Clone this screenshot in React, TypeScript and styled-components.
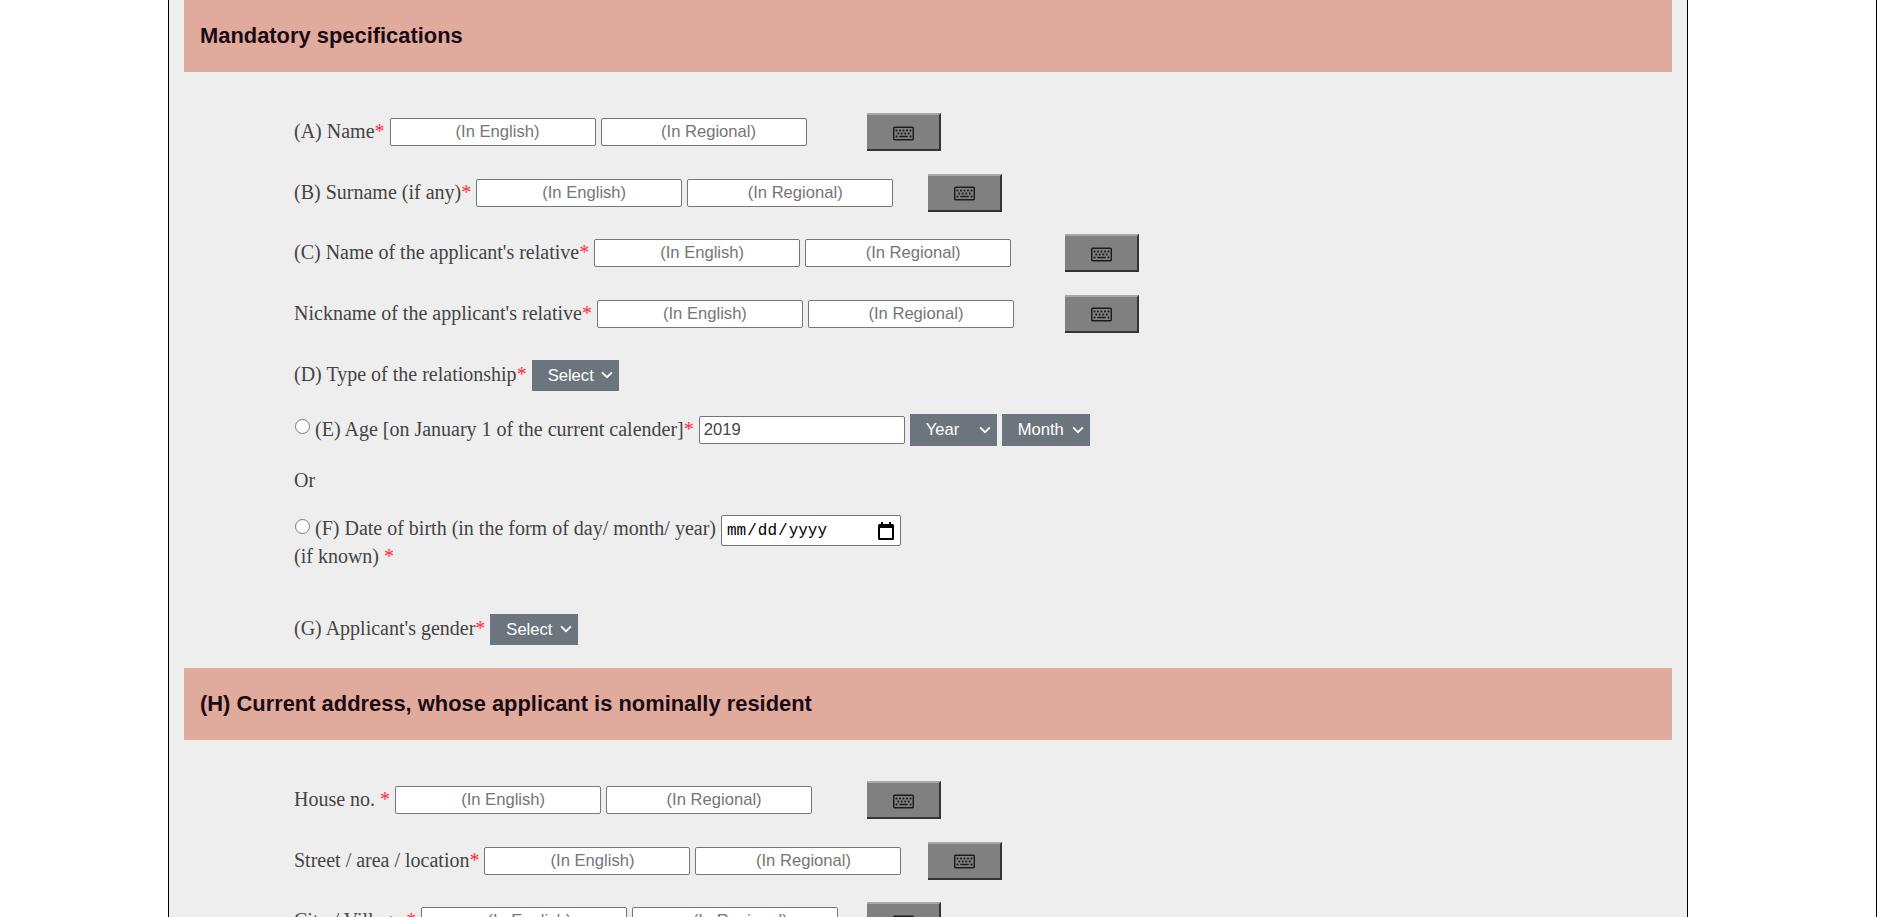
import { createGlobalStyle, styled } from 'styled-components';
import { FaRegKeyboard } from 'react-icons/fa';

const GlobalStyle = createGlobalStyle`
	html, body {
		margin: 0;
		height: 917px;
		overflow: hidden;
		background: #fff;
	}
`;

const CHEVRON =
	"url(\"data:image/svg+xml,%3Csvg xmlns='http://www.w3.org/2000/svg' viewBox='0 0 11 7'%3E%3Cpath d='M1 1l4.5 4.5L10 1' fill='none' stroke='%23fff' stroke-width='1.6'/%3E%3C/svg%3E\")";

const CALENDAR =
	"url(\"data:image/svg+xml,%3Csvg xmlns='http://www.w3.org/2000/svg' viewBox='0 0 16 18'%3E%3Cpath d='M3 0h2v2h6V0h2v2h1.5A1.5 1.5 0 0 1 16 3.500V16.500A1.500 1.500 0 0 1 14.500 18H1.500A1.500 1.500 0 0 1 0 16.500V3.500A1.500 1.500 0 0 1 1.500 2H3zM2 6v10h12V6z'/%3E%3C/svg%3E\")";

const Page = styled.div`
	width: 1877px;
	height: 917px;
	padding-left: 168px;
	box-sizing: border-box;
	border-right: 1px solid #000;
	overflow: hidden;
`;

const Frame = styled.main`
	width: 1520px;
	height: 917px;
	box-sizing: border-box;
	border-left: 1px solid #000;
	border-right: 1px solid #000;
	padding: 0 15px;
	background: #eee;
`;

const Band = styled.h2`
	margin: ${(p) => p.$top ?? 0}px 0 0;
	height: 72px;
	padding-left: 16px;
	display: flex;
	align-items: center;
	background: #e0aa9c;
	color: #1c0a12;
	font: bold 21.9px 'Liberation Sans', Arial, sans-serif;
`;

const Form = styled.form`
	padding-left: 110px;
	padding-top: ${(p) => p.$top ?? 0}px;
	color: #444;
	font: 20px/27px 'Liberation Serif', 'Times New Roman', serif;
`;

const Row = styled.div`
	display: flex;
	align-items: center;
	min-height: ${(p) => p.$height ?? 38}px;
	margin-top: ${(p) => p.$top ?? 22.5}px;
`;

const Fields = styled.div`
	width: ${(p) => (p.$width ? `${p.$width}px` : 'auto')};
	flex-shrink: 0;
`;

const SecondLine = styled.div`
	margin-top: -3px;
`;

const Star = styled.span`
	color: #ff2a3c;
`;

const TextInput = styled.input`
	width: 206px;
	height: 28px;
	box-sizing: border-box;
	padding: 1px 4px 1px ${(p) => (p.$left ? 4 : 14)}px;
	vertical-align: ${(p) => (p.$left ? 0 : 1)}px;
	border: 1px solid #767676;
	border-radius: 2px;
	background: #fff;
	color: #444;
	font: 16.6px 'Liberation Sans', Arial, sans-serif;
	text-align: ${(p) => (p.$left ? 'left' : 'center')};

	&::placeholder {
		color: #757575;
		opacity: 1;
	}
`;

const DateInput = styled.input`
	width: 180px;
	height: 31px;
	box-sizing: border-box;
	padding-left: 4px;
	border: 1px solid #767676;
	border-radius: 2px;
	background: #fff;
	color: #000;
	font: 16px 'Liberation Mono', monospace;

	&::-webkit-calendar-picker-indicator {
		width: 16px;
		height: 18px;
		padding: 0;
		margin-right: 6px;
		background: ${CALENDAR} center / contain no-repeat;
	}
`;

const Select = styled.select`
	width: ${(p) => p.$width ?? 87}px;
	height: ${(p) => p.$height ?? 31}px;
	padding: 0 0 0 16px;
	border: 0;
	border-radius: 0;
	appearance: none;
	background: #6c757d ${CHEVRON} no-repeat right 6px center / 12px 8px;
	color: #fff;
	font: 16.6px 'Liberation Sans', Arial, sans-serif;
`;

const Radio = styled.input`
	width: 15px;
	height: 15px;
	margin: 0 0 0 1px;
	vertical-align: 1px;
`;

const KeyButton = styled.button`
	width: 74px;
	height: 38px;
	flex-shrink: 0;
	padding: 2px 0 0;
	display: flex;
	align-items: center;
	justify-content: center;
	background: #808080;
	border-style: solid;
	border-width: 2px 2px 2px 0;
	border-color: #a8a8a8 #333 #333 #808080;
	color: #1c1c1c;
	font-size: 21px;
`;

function NameField({ label, width }: { label: string; width: number }) {
	return (
		<Row>
			<Fields $width={width}>
				{label}
				<Star>*</Star> <TextInput placeholder="(In English)" /> <TextInput placeholder="(In Regional)" />
			</Fields>
			<KeyButton type="button" aria-label="Keyboard">
				<FaRegKeyboard />
			</KeyButton>
		</Row>
	);
}

export default function App() {
	return (
		<>
			<GlobalStyle />
			<Page>
				<Frame>
					<Band>Mandatory specifications</Band>
					<Form $top={18.5}>
						<NameField label="(A) Name" width={573} />
						<NameField label="(B) Surname (if any)" width={634} />
						<NameField label="(C) Name of the applicant's relative" width={771} />
						<NameField label="Nickname of the applicant's relative" width={771} />
						<Row $height={31} $top={27}>
							<Fields>
								(D) Type of the relationship<Star>*</Star>{' '}
								<Select $width={87}>
									<option>Select</option>
								</Select>
							</Fields>
						</Row>
						<Row $height={32} $top={23}>
							<Fields>
								<Radio type="radio" name="age" /> (E) Age [on January 1 of the current calender]<Star>*</Star>{' '}
								<TextInput defaultValue="2019" $left />{' '}
								<Select $width={87} $height={32}>
									<option>Year</option>
								</Select>{' '}
								<Select $width={88} $height={32}>
									<option>Month</option>
								</Select>
							</Fields>
						</Row>
						<Row $height={27} $top={21}>
							<Fields>Or</Fields>
						</Row>
						<Row $height={58} $top={20}>
							<Fields>
								<Radio type="radio" name="age" /> (F) Date of birth (in the form of day/ month/ year){' '}
								<DateInput type="date" />
								<SecondLine>
									(if known) <Star>*</Star>
								</SecondLine>
							</Fields>
						</Row>
						<Row $height={31} $top={42}>
							<Fields>
								(G) Applicant's gender<Star>*</Star>{' '}
								<Select $width={88}>
									<option>Select</option>
								</Select>
							</Fields>
						</Row>
					</Form>
					<Band $top={23}>(H) Current address, whose applicant is nominally resident</Band>
					<Form $top={19}>
						<NameField label="House no. " width={573} />
						<NameField label="Street / area / location" width={634} />
						<NameField label="City / Village " width={573} />
					</Form>
				</Frame>
			</Page>
		</>
	);
}
